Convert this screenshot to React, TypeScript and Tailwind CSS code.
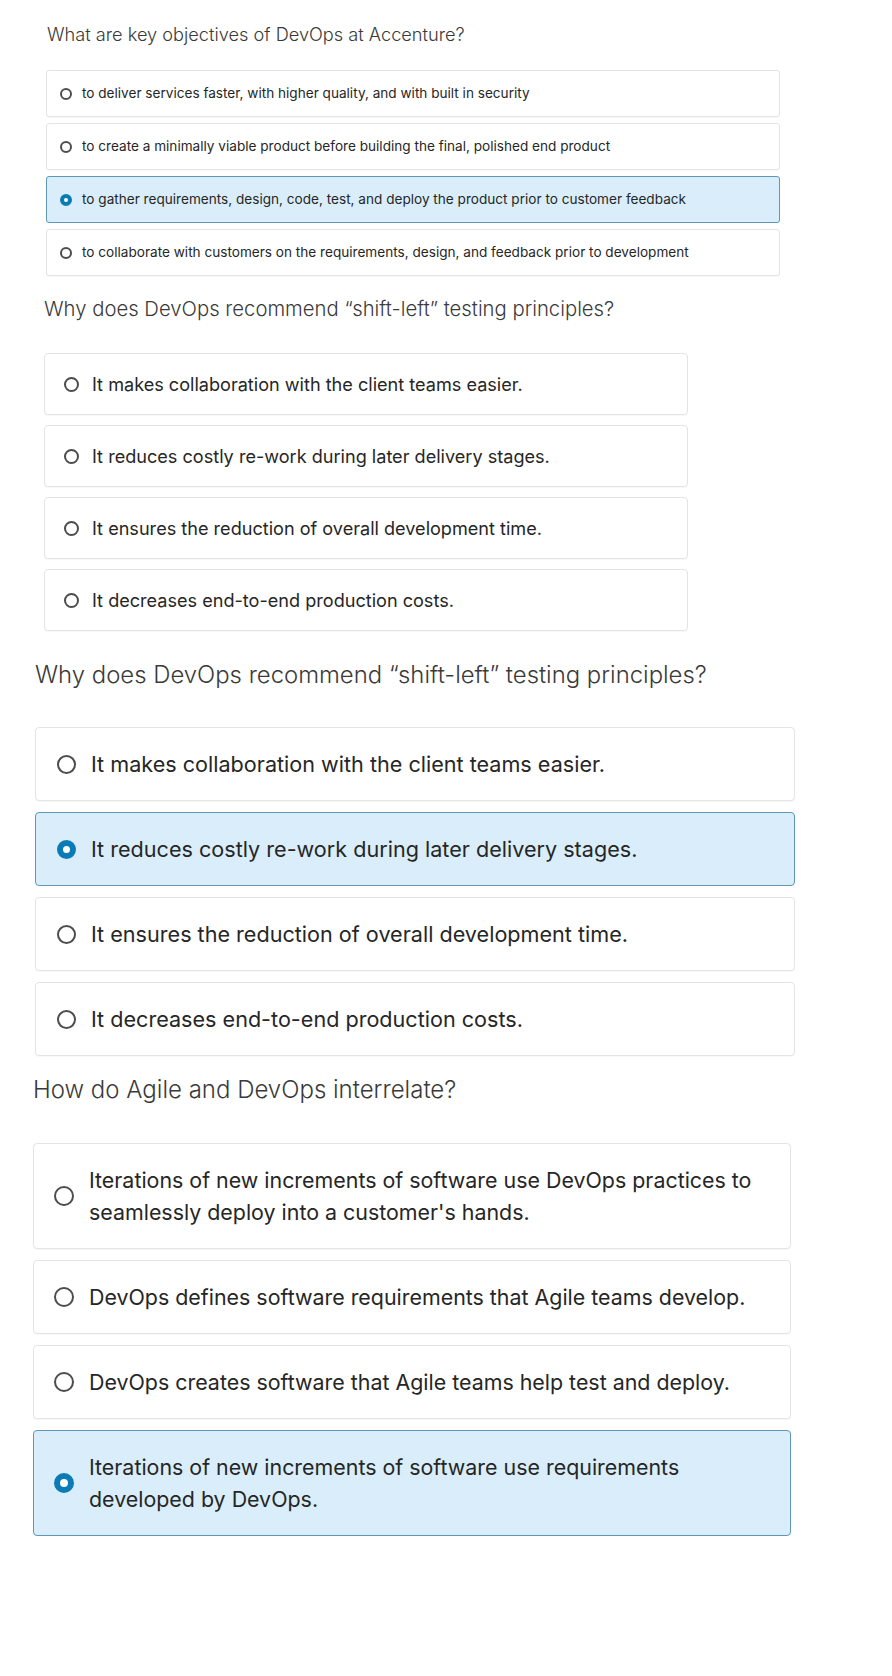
import React from "react";

interface Question {
  title: string;
  options: string[];
  selected: number | null;
}

interface Sizes {
  wrap: string;
  title: string;
  list: string;
  box: string;
  text: string;
  ring: string;
  dot: string;
}

const questions: { q: Question; s: Sizes }[] = [
  {
    q: {
      title: "What are key objectives of DevOps at Accenture?",
      options: [
        "to deliver services faster, with higher quality, and with built in security",
        "to create a minimally viable product before building the final, polished end product",
        "to gather requirements, design, code, test, and deploy the product prior to customer feedback",
        "to collaborate with customers on the requirements, design, and feedback prior to development",
      ],
      selected: 2,
    },
    s: {
      wrap: "pt-[22px] pl-[46px] w-[780px]",
      title: "text-[18.2px] leading-[24px] pl-[1px]",
      list: "mt-[24px] gap-[6px]",
      box: "min-h-[47px] pl-[13px] pr-4 gap-[10px] rounded-[3px]",
      text: "text-[13.6px] leading-[17px]",
      ring: "w-[12px] h-[12px] border-2",
      dot: "w-[12px] h-[12px] border-[4px]",
    },
  },
  {
    q: {
      title: "Why does DevOps recommend \u201cshift-left\u201d testing principles?",
      options: [
        "It makes collaboration with the client teams easier.",
        "It reduces costly re-work during later delivery stages.",
        "It ensures the reduction of overall development time.",
        "It decreases end-to-end production costs.",
      ],
      selected: null,
    },
    s: {
      wrap: "pt-[20px] pl-[44px] w-[688px]",
      title: "text-[20.3px] leading-[26px]",
      list: "mt-[31px] gap-[10px]",
      box: "min-h-[62px] pl-[19px] pr-4 gap-[13px] rounded-[4px]",
      text: "text-[18.1px] leading-[24px]",
      ring: "w-[15px] h-[15px] border-[2.5px]",
      dot: "w-[15px] h-[15px] border-[5px]",
    },
  },
  {
    q: {
      title: "Why does DevOps recommend \u201cshift-left\u201d testing principles?",
      options: [
        "It makes collaboration with the client teams easier.",
        "It reduces costly re-work during later delivery stages.",
        "It ensures the reduction of overall development time.",
        "It decreases end-to-end production costs.",
      ],
      selected: 1,
    },
    s: {
      wrap: "pt-[29px] pl-[35px] w-[795px]",
      title: "text-[23.9px] leading-[30px]",
      list: "mt-[37px] gap-[11px]",
      box: "min-h-[74px] pl-[21px] pr-6 gap-[15px] rounded-[4px]",
      text: "text-[21.6px] leading-[28px]",
      ring: "w-[19px] h-[19px] border-[2.5px]",
      dot: "w-[19px] h-[19px] border-[6px]",
    },
  },
  {
    q: {
      title: "How do Agile and DevOps interrelate?",
      options: [
        "Iterations of new increments of software use DevOps practices to seamlessly deploy into a customer's hands.",
        "DevOps defines software requirements that Agile teams develop.",
        "DevOps creates software that Agile teams help test and deploy.",
        "Iterations of new increments of software use requirements developed by DevOps.",
      ],
      selected: 3,
    },
    s: {
      wrap: "pt-[19px] pl-[33px] w-[791px]",
      title: "text-[24px] leading-[30px]",
      list: "mt-[38px] gap-[11px]",
      box: "min-h-[74px] py-[20px] pl-[20px] pr-[30px] gap-[15px] rounded-[4px]",
      text: "text-[21.4px] leading-[32px]",
      ring: "w-[20px] h-[20px] border-[2.5px]",
      dot: "w-[20px] h-[20px] border-[6px]",
    },
  },
];

const App: React.FC = () => {
  return (
    <div
      className="min-h-[1676px] bg-white pb-[140px] text-[#262626]"
      style={{ fontFamily: "Inter, 'Open Sans', sans-serif" }}
    >
      {questions.map(({ q, s }, qi) => (
        <div key={qi} className={s.wrap}>
          <h2 className={`${s.title} font-light text-[#3a3a3a]`}>{q.title}</h2>

          {/* Options */}
          <div className={`flex flex-col ${s.list}`}>
            {q.options.map((opt, i) => {
              const active = q.selected === i;
              return (
                <div
                  key={i}
                  className={`flex items-center border ${s.box} ${
                    active
                      ? "bg-[#d9eefa] border-[#5f97b9]"
                      : "bg-white border-[#e4e4e4] shadow-[0_1px_1px_rgba(0,0,0,0.03)]"
                  }`}
                >
                  <span
                    className={`shrink-0 rounded-full ${
                      active
                        ? `${s.dot} border-[#0b7bb5] bg-white`
                        : `${s.ring} border-[#4d4d4d] bg-white`
                    }`}
                  />
                  <span className={s.text}>{opt}</span>
                </div>
              );
            })}
          </div>
        </div>
      ))}
    </div>
  );
};

export default App;
